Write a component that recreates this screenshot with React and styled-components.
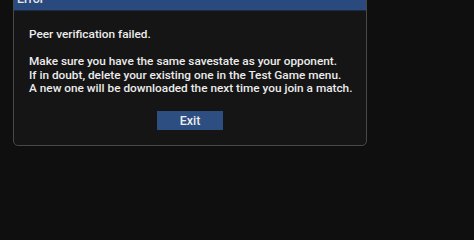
import React from "react";
import styled, { createGlobalStyle } from "styled-components";

const Global = createGlobalStyle`
  html, body { margin: 0; padding: 0; background: #0f0f0f; overflow: hidden; }
  body { width: 474px; height: 220px; font-family: Roboto, "Liberation Sans", sans-serif; }
`;

const Page = styled.div`
  width: 474px;
  height: 220px;
  background: #0f0f0f;
  padding-left: 13px;
  box-sizing: border-box;
  overflow: hidden;
`;

const Modal = styled.div`
  margin-top: -9px;
  width: 354px;
  height: 155px;
  box-sizing: border-box;
  background: #151515;
  border: 1px solid #484848;
  border-radius: 5px;
  overflow: hidden;
  display: flex;
  flex-direction: column;
`;

const TitleBar = styled.div`
  height: 18px;
  flex: none;
  background: #2a4a7e;
  border-bottom: 1px solid #1c2c44;
  color: #e6e6e6;
  font-size: 12.5px;
  font-weight: 500;
  line-height: 13px;
  padding-left: 3px;
`;

const Body = styled.div`
  flex: 1;
  display: flex;
  flex-direction: column;
  padding: 17px 0 0 15px;
`;

const Message = styled.p`
  margin: 0;
  color: #ececec;
  font-size: 11.8px;
  font-weight: 500;
  line-height: 13.5px;
  white-space: pre;
`;

const Actions = styled.div`
  display: flex;
  justify-content: center;
  margin-top: 15px;
  padding-right: 15px;
`;

const Button = styled.button`
  width: 66px;
  height: 19px;
  border: none;
  padding: 0;
  background: #2c4e80;
  color: #ececec;
  font-family: Roboto, "Liberation Sans", sans-serif;
  font-size: 12.5px;
  font-weight: 500;
  line-height: 19px;
`;

export default function App() {
  return (
    <>
      <Global />
      <Page>
        <Modal>
          <TitleBar>Error</TitleBar>
          <Body>
            <Message>{"Peer verification failed.\n\nMake sure you have the same savestate as your opponent.\nIf in doubt, delete your existing one in the Test Game menu.\nA new one will be downloaded the next time you join a match."}</Message>
            <Actions>
              <Button>Exit</Button>
            </Actions>
          </Body>
        </Modal>
      </Page>
    </>
  );
}
